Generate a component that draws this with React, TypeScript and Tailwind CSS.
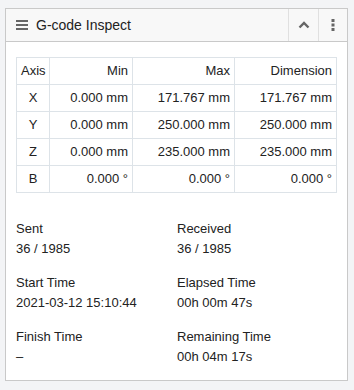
const ROWS = [
  { axis: 'X', min: '0.000 mm', max: '171.767 mm', dim: '171.767 mm' },
  { axis: 'Y', min: '0.000 mm', max: '250.000 mm', dim: '250.000 mm' },
  { axis: 'Z', min: '0.000 mm', max: '235.000 mm', dim: '235.000 mm' },
  { axis: 'B', min: '0.000 °', max: '0.000 °', dim: '0.000 °' },
];

const STATS = [
  ['Sent', '36 / 1985', 'Received', '36 / 1985'],
  ['Start Time', '2021-03-12 15:10:44', 'Elapsed Time', '00h 00m 47s'],
  ['Finish Time', '–', 'Remaining Time', '00h 04m 17s'],
];

export default function App() {
  return (
    <div className="h-[390px] w-[354px] bg-[#f3f4f6] pl-[5px] pt-[8px] font-['Liberation_Sans',Arial,sans-serif] text-[#222]">
      <div className="flex h-[373px] w-[343px] flex-col border border-[#c9c9c9] bg-white">
        <div className="flex h-[33px] items-stretch border-b border-[#c9c9c9] bg-[#f8f8f8]">
          <div className="flex flex-1 items-center">
            <svg width="12" height="10" viewBox="0 0 12 10" className="ml-[10px] text-[#666]">
              <rect x="0" y="0" width="12" height="2" fill="currentColor" />
              <rect x="0" y="4" width="12" height="2" fill="currentColor" />
              <rect x="0" y="8" width="12" height="2" fill="currentColor" />
            </svg>
            <span className="ml-[8px] text-[14px] text-[#222]">G-code Inspect</span>
          </div>
          <button type="button" className="flex w-[30px] items-center justify-center border-l border-[#e0e0e0] text-[#666]">
            <svg width="12" height="8" viewBox="0 0 12 8">
              <path d="M1.5 6.5 L6 2 L10.5 6.5" fill="none" stroke="currentColor" strokeWidth="2.4" />
            </svg>
          </button>
          <button type="button" className="flex w-[29px] items-center justify-center border-l border-[#e0e0e0] text-[#666]">
            <svg width="4" height="12" viewBox="0 0 4 12">
              <rect x="0.5" y="0" width="3" height="3" fill="currentColor" />
              <rect x="0.5" y="4.5" width="3" height="3" fill="currentColor" />
              <rect x="0.5" y="9" width="3" height="3" fill="currentColor" />
            </svg>
          </button>
        </div>
        <div className="px-[10px] pt-[15px] text-[13px]">
          <table className="w-[320px] table-fixed border-collapse">
            <colgroup>
              <col className="w-[33px]" />
              <col className="w-[83px]" />
              <col className="w-[102px]" />
              <col className="w-[102px]" />
            </colgroup>
            <thead>
              <tr className="h-[27px]">
                <th className="border border-[#dde3e8] px-[4px] text-center font-normal">Axis</th>
                <th className="border border-[#dde3e8] px-[4px] text-right font-normal">Min</th>
                <th className="border border-[#dde3e8] px-[4px] text-right font-normal">Max</th>
                <th className="border border-[#dde3e8] px-[4px] text-right font-normal">Dimension</th>
              </tr>
            </thead>
            <tbody>
              {ROWS.map((r) => (
                <tr key={r.axis} className="h-[27px]">
                  <td className="border border-[#dde3e8] px-[4px] text-center">{r.axis}</td>
                  <td className="border border-[#dde3e8] px-[4px] text-right">{r.min}</td>
                  <td className="border border-[#dde3e8] px-[4px] text-right">{r.max}</td>
                  <td className="border border-[#dde3e8] px-[4px] text-right">{r.dim}</td>
                </tr>
              ))}
            </tbody>
          </table>
          <div className="mt-[26px] flex flex-col gap-[14px]">
            {STATS.map(([l1, v1, l2, v2]) => (
              <div key={l1} className="grid grid-cols-[161px_1fr] leading-[20px]">
                <div>
                  <div>{l1}</div>
                  <div>{v1}</div>
                </div>
                <div>
                  <div>{l2}</div>
                  <div>{v2}</div>
                </div>
              </div>
            ))}
          </div>
        </div>
      </div>
    </div>
  );
}
